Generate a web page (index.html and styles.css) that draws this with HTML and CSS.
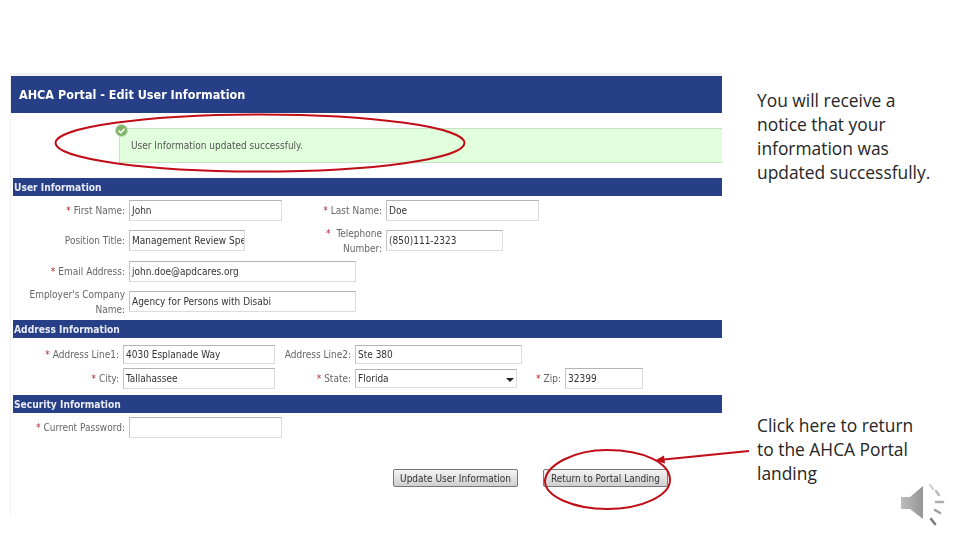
FILE: index.html
```html
<!DOCTYPE html>
<html lang="en">
<head>
<meta charset="utf-8">
<title>AHCA Portal - Edit User Information</title>
<link rel="stylesheet" href="styles.css">
</head>
<body>
<main class="slide">
  <section class="shot">
    <h1 class="title">AHCA Portal - Edit User Information</h1>
    <div class="notice">
      <svg class="check" width="13" height="13" viewBox="0 0 13 13"><circle cx="6.5" cy="6.5" r="6" fill="#7fb56a" stroke="#c4dcb8"/><path d="M3.6 6.6l2.2 2.2 3.8-4" fill="none" stroke="#fff" stroke-width="1.6"/></svg>
      <span>User Information updated successfuly.</span>
    </div>
    <h2 class="bar">User Information</h2>
    <div class="form user">
      <label class="lbl"><i>*</i> First Name:</label>
      <div class="inp w153">John</div>
      <label class="lbl"><i>*</i> Last Name:</label>
      <div class="inp w153">Doe</div>
      <label class="lbl">Position Title:</label>
      <div class="inp w116">Management Review Spe</div>
      <label class="lbl two tel"><i>*</i> Telephone Number:</label>
      <div class="inp w117">(850)111-2323</div>
      <label class="lbl email-row"><i>*</i> Email Address:</label>
      <div class="inp w227 span2 email-row">john.doe@apdcares.org</div>
      <label class="lbl two first-col">Employer's Company Name:</label>
      <div class="inp w227 span2">Agency for Persons with Disabi</div>
    </div>
    <h2 class="bar addr">Address Information</h2>
    <div class="form address">
      <label class="lbl"><i>*</i> Address Line1:</label>
      <div class="inp short w152">4030 Esplanade Way</div>
      <label class="lbl">Address Line2:</label>
      <div class="inp short w167">Ste 380</div>
      <label class="lbl"><i>*</i> City:</label>
      <div class="inp w152">Tallahassee</div>
      <label class="lbl"><i>*</i> State:</label>
      <div class="state-row">
        <div class="inp select">Florida<svg class="caret" width="8" height="4" viewBox="0 0 8 4"><path d="M0 0h8L4 4z" fill="#222"/></svg></div>
        <label class="lbl zip"><i>*</i> Zip:</label>
        <div class="inp w78">32399</div>
      </div>
    </div>
    <h2 class="bar sec">Security Information</h2>
    <div class="form user pass">
      <label class="lbl"><i>*</i> Current Password:</label>
      <div class="inp w153"></div>
    </div>
    <div class="buttons">
      <button class="btn" type="button">Update User Information</button>
      <button class="btn" type="button">Return to Portal Landing</button>
    </div>
  </section>
  <aside class="notes">
    <p class="note first">You will receive a notice that your information was updated successfully.</p>
    <p class="note second">Click here to return to the AHCA Portal landing</p>
    <svg class="speaker" width="46" height="44" viewBox="0 0 46 44">
      <defs>
        <linearGradient id="sp" x1="0" x2="1" y1="0" y2="0"><stop offset="0" stop-color="#bcbcbc"/><stop offset="1" stop-color="#959595"/></linearGradient>
      </defs>
      <path d="M1 15h9L23 4v33L10 27H1z" fill="url(#sp)"/>
      <g fill="none" stroke-width="2.6" stroke-linecap="round">
        <path d="M30 3l3 4" stroke="#d6d6d6"/>
        <path d="M36 9l3 4" stroke="#bdbdbd"/>
        <path d="M36 20h7" stroke="#adadad"/>
        <path d="M35 28l5 3" stroke="#a0a0a0"/>
        <path d="M31 37l4 5" stroke="#7c7c7c"/>
      </g>
    </svg>
  </aside>
  <svg class="marks" width="960" height="540" viewBox="0 0 960 540">
    <g fill="none" stroke="#c00d17" stroke-width="2">
      <ellipse cx="260" cy="143" rx="204.500" ry="28.500"/>
      <path d="M607 450c-33 0-61 15-62 31 0 16 30 28 62 28 36 0 63-14 63-29 0-17-26-30-63-30z"/>
      <path d="M749 451l-90 9"/>
    </g>
    <path d="M655 460.500l9-5 1 8z" fill="#c00d17"/>
  </svg>
</main>
</body>
</html>
```
FILE: styles.css
```css
* { box-sizing: border-box; }
html, body { margin: 0; padding: 0; }
body { width: 960px; height: 540px; overflow: hidden; background: #fff; font-family: "DejaVu Sans Condensed", "DejaVu Sans", sans-serif; }
.slide { position: relative; display: flex; width: 960px; height: 540px; padding: 73px 0 0 10px; }
.shot { width: 712px; height: 443px; border-top: 3px solid #f3f3f3; border-left: 1px solid #f1f1f1; background: #fff; filter: blur(0.35px); flex: none; }
.title { margin: 0; height: 37px; background: #273f87; color: #fff; font-size: 12.500px; line-height: 38px; font-weight: 700; padding-left: 8px; }
.notice { position: relative; height: 35px; margin: 15px 0 15px 108px; background: #e0fddc; border: 1px solid #c6e6c1; border-right: 0; font-size: 10px; line-height: 34px; color: #555; padding-left: 11px; }
.check { position: absolute; left: -5px; top: -5px; }
.bar { margin: 0 0 0 2px; height: 18px; background: #273f87; color: #e9ecf6; font-size: 10.200px; line-height: 19px; font-weight: 700; padding-left: 1px; }
.bar.addr { margin-top: 8px; }
.bar.sec { margin-top: 6px; }
.form { display: grid; margin-left: 2px; font-size: 10px; color: #333; }
.user { grid-template-columns: 116px 153px 104px 1fr; row-gap: 9px; margin-top: 4px; }
.address { grid-template-columns: 110px 152px 80px 1fr; row-gap: 4px; margin-top: 7px; }
.pass { margin-top: 4px; }
.lbl { display: flex; align-items: center; justify-content: flex-end; text-align: right; padding-right: 4px; color: #666; line-height: 15px; white-space: nowrap; }
.lbl i { font-style: normal; color: #b5292f; margin-right: 3px; }
.lbl.two { display: block; margin: -4px 0; height: 29px; white-space: normal; }
.lbl.tel { padding-left: 30px; }
.lbl.first-col { grid-column: 1; padding-left: 14px; }
.inp { position: relative; height: 21px; background: #fff; border: 1px solid #dcdcdc; border-top-color: #b4b4b4; border-left-color: #c4c4c4; line-height: 19px; padding-left: 2px; color: #333; white-space: nowrap; overflow: hidden; }
.inp.short { height: 19px; line-height: 17px; }
.email-row { margin-top: 1px; }
.w153 { width: 153px; }
.w152 { width: 152px; }
.w116 { width: 116px; }
.w117 { width: 117px; }
.w167 { width: 167px; }
.w78 { width: 78px; }
.w227 { width: 227px; }
.span2 { grid-column: span 2; }
.state-row { display: flex; }
.select { width: 162px; height: 19px; margin-top: 1px; line-height: 17px; }
.caret { position: absolute; right: 2px; top: 8px; }
.lbl.zip { width: 48px; }
.buttons { display: flex; gap: 25px; margin-top: 31px; padding-left: 382px; }
.btn { width: 125px; height: 18px; padding: 0; border: 1px solid #777; border-radius: 2px; background: linear-gradient(#f4f4f4, #cfcfcf); font: 10px "DejaVu Sans Condensed", "DejaVu Sans", sans-serif; color: #333; white-space: nowrap; }
.notes { position: relative; flex: 1; padding: 15px 0 0 35px; }
.note { margin: 0; width: 175px; font-family: "Open Sans", sans-serif; font-size: 17.400px; line-height: 24px; color: #262626; }
.note.second { margin-top: 229px; }
.speaker { position: absolute; left: 178px; top: 409px; filter: blur(0.5px); }
.marks { position: absolute; left: 0; top: 0; pointer-events: none; }
```
